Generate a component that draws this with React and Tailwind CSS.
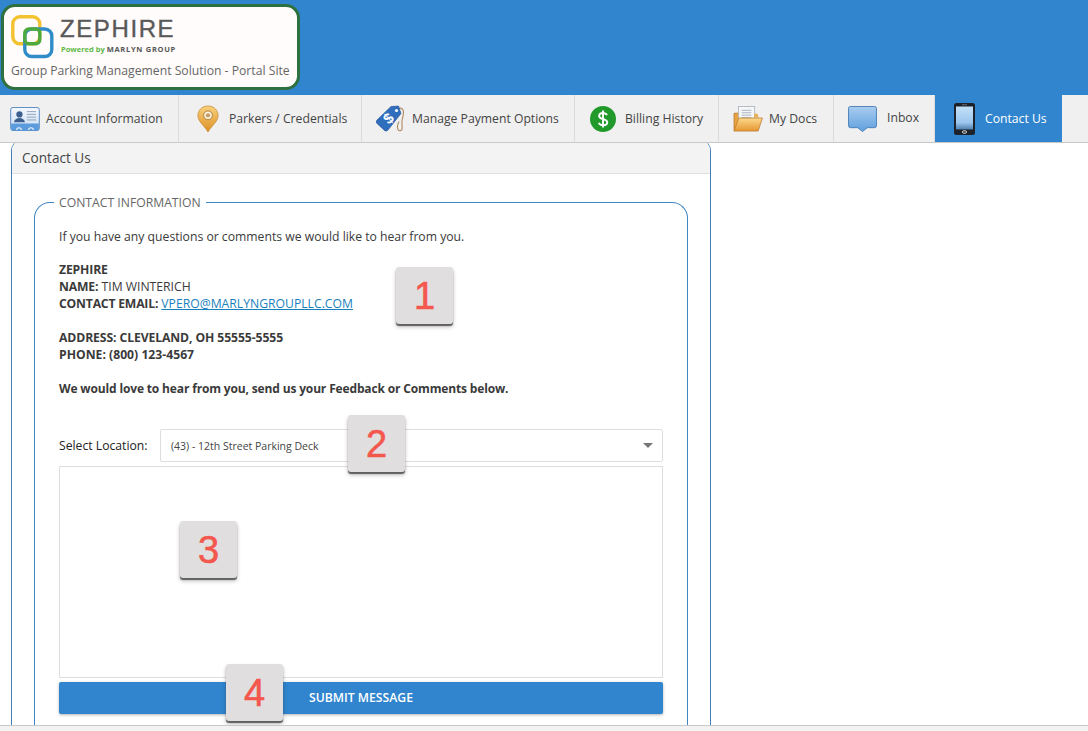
function IdIcon() {
  return (
    <svg width="30" height="24" viewBox="0 0 32 26">
      <defs>
        <linearGradient id="idg" x1="0" y1="0" x2="0" y2="1"><stop offset="0" stopColor="#f4f8fd"/><stop offset="1" stopColor="#c9dcf3"/></linearGradient>
      </defs>
      <rect x="0.5" y="0.5" width="31" height="25" rx="2.5" fill="url(#idg)" stroke="#4d82bd"/>
      <path d="M1 18h30v5.500a2 2 0 0 1-2 2H3a2 2 0 0 1-2-2z" fill="#5c9bdc"/>
      <circle cx="10" cy="8" r="3.400" fill="#3d5f8f"/>
      <path d="M4 16.500c.3-3 3-4.700 6-4.700s5.700 1.700 6 4.700z" fill="#3d5f8f"/>
      <path d="M18 5h10M18 8h10M18 11h10M18 14h10" stroke="#8b9db5" strokeWidth="1"/>
      <path d="M7 25a2.500 2.500 0 0 1 5 0M20 25a2.500 2.500 0 0 1 5 0" fill="none" stroke="#eef5fc" strokeWidth="1.200"/>
    </svg>
  );
}
function PinIcon() {
  return (
    <svg width="22" height="28" viewBox="0 0 24 30">
      <defs>
        <linearGradient id="ping" x1="0" y1="0" x2="0" y2="1"><stop offset="0" stopColor="#f8d27d"/><stop offset="1" stopColor="#dc8f25"/></linearGradient>
      </defs>
      <path d="M12 .8C5.600.8 1 5.400 1 11.200c0 6.800 7.500 11.500 11 18 3.500-6.500 11-11.200 11-18C23 5.400 18.400.8 12 .8z" fill="url(#ping)" stroke="#c9862c" strokeWidth=".8"/>
      <circle cx="12" cy="11" r="4.800" fill="#fdf3de" stroke="#a9762f" strokeWidth="1"/>
      <circle cx="12" cy="11" r="2.400" fill="#c2a06a"/>
    </svg>
  );
}
function TagIcon() {
  return (
    <svg width="30" height="27" viewBox="0 0 30 27">
      <path d="M22 4c3-2 6 0 5.500 4-.3 3-1 5-1.500 8-.4 3 .5 6 0 8-.5 2-3 2.500-4 .5-1-2-.5-5 1-8" fill="none" stroke="#b08a5f" strokeWidth="1.100"/>
      <path d="M15 1.500l7.500-.5 2.500 7.500L12 25a2.500 2.500 0 0 1-3.500.4L1 18.500a2.500 2.500 0 0 1 0-3.500z" fill="#2f6dbd" stroke="#234f95" strokeWidth=".6"/>
      <circle cx="20.500" cy="5.500" r="1.600" fill="#f3f6fb"/>
      <text x="12.500" y="18.500" fontSize="15" fontWeight="700" fill="#fff" textAnchor="middle" transform="rotate(-42 12.500 13.500)" fontFamily="'Liberation Sans',sans-serif">$</text>
    </svg>
  );
}
function DollarIcon() {
  return (
    <svg width="26" height="26" viewBox="0 0 27 27">
      <circle cx="13.500" cy="13.500" r="13.500" fill="#229a2b"/>
      <path d="M17.700 9.300c-.8-1.500-2.400-2.100-4.200-2.100-2.300 0-4 1.200-4 3.100 0 4.300 8.400 2.400 8.400 6.500 0 2-1.900 3.200-4.300 3.200-2 0-3.700-.9-4.500-2.500M13.500 4.700v17.600" fill="none" stroke="#fff" strokeWidth="2"/>
    </svg>
  );
}
function FolderIcon() {
  return (
    <svg width="30" height="26" viewBox="0 0 31 27">
      <defs>
        <linearGradient id="fg" x1="0" y1="0" x2="0" y2="1"><stop offset="0" stopColor="#fbd98c"/><stop offset="1" stopColor="#e79632"/></linearGradient>
      </defs>
      <path d="M1 7.500h4l1.500-2H9v20H1z" fill="#e7a33f" stroke="#b8772a" strokeWidth=".8"/>
      <rect x="5.500" y=".5" width="17" height="19" fill="#f5f6f8" stroke="#a8adb6" strokeWidth=".8"/>
      <path d="M9 4.500h10M9 7h10M9 9.500h10M9 12h10" stroke="#a3abb8" strokeWidth=".9"/>
      <path d="M22 8h3.500l1 4H22z" fill="#eab052"/>
      <path d="M6 12.500h24.500L26 26H1z" fill="url(#fg)" stroke="#bd7b2b" strokeWidth=".8"/>
    </svg>
  );
}
function BubbleIcon() {
  return (
    <svg width="29" height="26" viewBox="0 0 30 27">
      <defs>
        <linearGradient id="bg" x1="0" y1="0" x2="0" y2="1"><stop offset="0" stopColor="#a9cdf0"/><stop offset="1" stopColor="#5f9fdd"/></linearGradient>
      </defs>
      <path d="M2.500.5h25a2 2 0 0 1 2 2v18a2 2 0 0 1-2 2H20L15 26.500 10 22.500H2.500a2 2 0 0 1-2-2v-18a2 2 0 0 1 2-2z" fill="url(#bg)" stroke="#4b80b8"/>
    </svg>
  );
}
function PhoneIcon() {
  return (
    <svg width="21" height="32" viewBox="0 0 21 32">
      <defs>
        <linearGradient id="sg" x1="0" y1="0" x2="0" y2="1"><stop offset="0" stopColor="#c4e0f8"/><stop offset=".7" stopColor="#9cc6ee"/><stop offset="1" stopColor="#4f7fae"/></linearGradient>
      </defs>
      <rect x="0" y="0" width="21" height="32" rx="2.500" fill="#1d2129"/>
      <rect x="2" y="3.500" width="17" height="23" fill="url(#sg)"/>
      <rect x="8" y="1.300" width="5" height=".9" fill="#70757d"/>
      <rect x="8.500" y="27.800" width="4" height="2.400" rx="1.200" fill="none" stroke="#f0f0f0" strokeWidth=".9"/>
    </svg>
  );
}
function Logo() {
  return (
    <svg width="43" height="44" viewBox="0 0 43 44" className="shrink-0">
      <rect x="1.800" y="1.800" width="27" height="27" rx="7" fill="none" stroke="#f2c230" strokeWidth="3.400"/>
      <rect x="13.800" y="14" width="27" height="27.500" rx="7" fill="none" stroke="#2f8cc8" strokeWidth="3.400"/>
      <rect x="13.800" y="14" width="15" height="14.800" rx="4" fill="none" stroke="#4ea93f" strokeWidth="3.400"/>
    </svg>
  );
}

const tabs = [
  { label: "Account Information", icon: <IdIcon />, w: "w-[179px]", pl: "pl-[10px]", gap: "gap-[6px]", text: "pt-[2px]" },
  { label: "Parkers / Credentials", icon: <PinIcon />, w: "w-[183px]", pl: "pl-[18px]", gap: "gap-[10px]", text: "pt-[2px]" },
  { label: "Manage Payment Options", icon: <TagIcon />, w: "w-[213px]", pl: "pl-[14px]", gap: "gap-[6px]", text: "pt-[2px]" },
  { label: "Billing History", icon: <DollarIcon />, w: "w-[144px]", pl: "pl-[15px]", gap: "gap-[9px]", text: "pt-[2px]" },
  { label: "My Docs", icon: <FolderIcon />, w: "w-[115px]", pl: "pl-[14px]", gap: "gap-[6px]", text: "pt-[2px]" },
  { label: "Inbox", icon: <BubbleIcon />, w: "w-[101px]", pl: "pl-[14px]", gap: "gap-[10px]", text: "pt-0" },
];

function Badge({ n, className }) {
  return (
    <div className={"absolute flex h-[57px] w-[57px] items-center justify-center rounded-[3px] bg-[#e0dede] text-[38px] leading-none text-[#f4574d] [-webkit-text-stroke:0.6px_#f4574d] shadow-[0_2px_1px_#5f5f5f,0_3px_4px_rgba(0,0,0,0.25)] font-['Liberation_Sans',sans-serif] " + className}>
      {n}
    </div>
  );
}

export default function App() {
  return (
    <div className="relative flex h-[731px] w-full flex-col overflow-hidden bg-white font-['Open_Sans',sans-serif] text-[12.2px] text-[#3a3a3a]">
      <header className="h-[95px] shrink-0 bg-[#3085ce] pl-[1px] pt-[4px]">
        <div className="flex h-[86px] w-[299px] flex-col rounded-[14px] border-[3px] border-[#2f7040] bg-[#fffcfb] pl-[7px] pt-[8px]">
          <div className="flex items-start gap-[6px]">
            <Logo />
            <div className="-mt-[1px] flex flex-col">
              <span className="text-[24px] font-normal leading-[30px] tracking-[1.6px] text-[#595959] [-webkit-text-stroke:0.4px_#595959] font-['Liberation_Sans',sans-serif]">ZEPHIRE</span>
              <span className="mt-[1px] whitespace-nowrap pl-[1px] text-[7.5px] font-bold leading-[9px]">
                <span className="text-[#62b946]">Powered by </span>
                <span className="tracking-[0.7px] text-[#555]">MARLYN GROUP</span>
              </span>
            </div>
          </div>
          <div className="mt-[3px] whitespace-nowrap text-[12.2px] leading-[17px] text-[#666]">Group Parking Management Solution - Portal Site</div>
        </div>
      </header>

      <nav className="relative z-10 flex h-[48px] shrink-0 border-b border-[#c8c8c8] bg-[#f0f0f0]">
        {tabs.map((t) => (
          <div key={t.label} className={"flex shrink-0 items-center whitespace-nowrap border-r border-[#dcdcdc] text-[12.2px] text-[#444] " + t.w + " " + t.pl + " " + t.gap}>
            {t.icon}
            <span className={t.text}>{t.label}</span>
          </div>
        ))}
        <div className="flex w-[127px] shrink-0 items-center gap-[10px] whitespace-nowrap bg-[#3085ce] pl-[19px] text-[12.2px] text-white">
          <PhoneIcon />
          <span className="pt-[2px]">Contact Us</span>
        </div>
      </nav>

      <main className="min-h-0 flex-1 overflow-hidden pl-[11px]">
        <section className="-mt-[4px] w-[700px] rounded-t-[12px] border-x border-[#3f7fb5]">
          <h2 className="flex h-[35px] items-center rounded-t-[12px] border-b border-[#e0e0e0] bg-[#f3f3f3] pl-[10px] pt-[4px] text-[13.6px] font-normal text-[#444]">Contact Us</h2>
          <div className="px-[22px] pt-[20px]">
            <fieldset className="min-w-0 rounded-t-[16px] border border-b-0 border-[#3f85c2] pb-[40px] pl-[24px] pr-[24px]">
              <legend className="-ml-[5px] px-[5px] text-[12.2px] leading-[17px] text-[#666]">CONTACT INFORMATION</legend>
              <p className="mt-[17px] leading-[17px]">If you have any questions or comments we would like to hear from you.</p>
              <div className="mt-[16px] leading-[17px]">
                <div className="font-bold tracking-[-0.15px]">ZEPHIRE</div>
                <div><b className="tracking-[-0.15px]">NAME:</b> TIM WINTERICH</div>
                <div><b className="tracking-[-0.2px]">CONTACT EMAIL:</b> <a className="text-[#1a7fbd] underline">VPERO@MARLYNGROUPLLC.COM</a></div>
              </div>
              <div className="mt-[17px] font-bold leading-[17px]">
                <div className="tracking-[-0.1px]">ADDRESS: CLEVELAND, OH 55555-5555</div>
                <div>PHONE: (800) 123-4567</div>
              </div>
              <p className="mt-[17px] text-[12px] font-bold leading-[17px] tracking-[-0.15px]">We would love to hear from you, send us your Feedback or Comments below.</p>
              <div className="mt-[32px] flex items-center">
                <label className="w-[101px] shrink-0 pt-[2px] text-[#222]">Select Location:</label>
                <div className="flex h-[33px] flex-1 items-center justify-between rounded-[2px] border border-[#dedede] pl-[10px] pr-[9px] text-[10.5px] text-[#444]">
                  <span className="pt-[2px]">(43) - 12th Street Parking Deck</span>
                  <span className="h-0 w-0 border-x-[5px] border-t-[5px] border-x-transparent border-t-[#777]"></span>
                </div>
              </div>
              <div className="mt-[4px] h-[212px] border border-[#dedede]"></div>
              <button className="mt-[4px] flex h-[32px] w-full items-center justify-center rounded-[2px] bg-[#3085ce] text-[12.2px] font-semibold text-white shadow-[0_1px_3px_rgba(0,0,0,0.3)]">SUBMIT MESSAGE</button>
            </fieldset>
          </div>
        </section>
      </main>

      <footer className="relative z-10 h-[6px] shrink-0 border-t border-[#c8c8c8] bg-[#f3f3f3]"></footer>

      <Badge n="1" className="left-[396px] top-[267px]" />
      <Badge n="2" className="left-[348px] top-[415px]" />
      <Badge n="3" className="left-[180px] top-[521px]" />
      <Badge n="4" className="left-[226px] top-[664px]" />
    </div>
  );
}
